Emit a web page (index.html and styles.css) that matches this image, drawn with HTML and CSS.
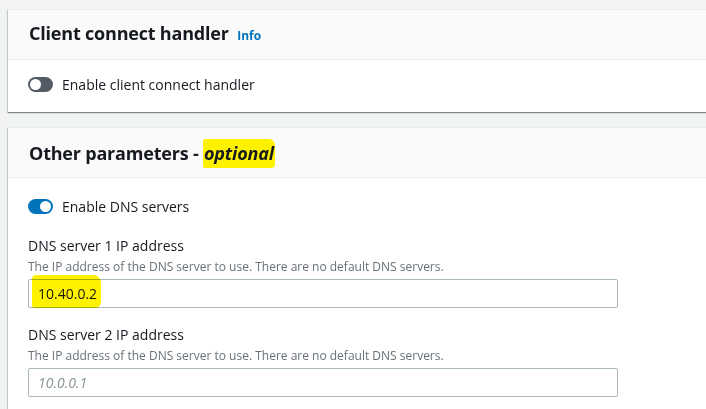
FILE: index.html
```html
<!DOCTYPE html>
<html lang="en">
<head>
  <meta charset="UTF-8">
  <meta name="viewport" content="width=device-width, initial-scale=1.0">
  <title>Client VPN endpoint settings</title>
  <link rel="stylesheet" href="styles.css">
</head>
<body>
  <div class="page">

    <!-- Client connect handler -->
    <section class="container">
      <div class="container-header">
        <h2>Client connect handler <a href="#" class="info">Info</a></h2>
      </div>
      <div class="container-body body-connect">
        <label class="toggle-row">
          <span class="toggle"></span>
          <span>Enable client connect handler</span>
        </label>
      </div>
    </section>

    <!-- Other parameters -->
    <section class="container">
      <div class="container-header">
        <h2>Other parameters - <span class="marker"><em>optional</em></span></h2>
      </div>
      <div class="container-body body-params">
        <label class="toggle-row">
          <span class="toggle on"></span>
          <span>Enable DNS servers</span>
        </label>

        <div class="field first">
          <div class="field-label">DNS server 1 IP address</div>
          <div class="field-desc">The IP address of the DNS server to use. There are no default DNS servers.</div>
          <div class="input-wrap">
            <input class="input" type="text" value="10.40.0.2">
            <span class="input-mark"></span>
          </div>
        </div>

        <div class="field">
          <div class="field-label">DNS server 2 IP address</div>
          <div class="field-desc">The IP address of the DNS server to use. There are no default DNS servers.</div>
          <div class="input-wrap">
            <input class="input" type="text" placeholder="10.0.0.1">
          </div>
        </div>
      </div>
    </section>

  </div>
</body>
</html>
```

FILE: styles.css
```css
html, body {
  margin: 0;
  padding: 0;
  overflow: hidden;
}

body {
  font-family: "Open Sans", "Noto Sans", sans-serif;
  background-color: #f2f3f3;
  color: #16191f;
}

.page {
  padding: 9px 0 0 8px;
}

.container {
  background-color: #fff;
  margin-right: -6px;
  margin-bottom: 15px;
  box-shadow: 0 1px 1px 0 rgba(0,28,36,0.3), 1px 1px 1px 0 rgba(0,28,36,0.15), -1px 1px 1px 0 rgba(0,28,36,0.15);
  border-top: 1px solid #eaeded;
}

.container-header {
  background-color: #fafafa;
  border-bottom: 1px solid #eaeded;
  height: 49px;
  padding: 0 21px;
  display: flex;
  align-items: center;
}

.container-header h2 {
  margin: 0;
  font-size: 18px;
  font-weight: 700;
  line-height: 22px;
  letter-spacing: -0.2px;
}

.info {
  font-size: 12px;
  font-weight: 700;
  color: #0073bb;
  text-decoration: none;
  margin-left: 4px;
  letter-spacing: 0;
}

.marker {
  background-color: #fff200;
  padding: 2px 1px 3px 1px;
  border-radius: 3px 6px 4px 2px;
}

.marker em {
  font-weight: 700;
}

.container-body {
  padding: 0 20px;
}

.body-connect {
  padding-top: 14px;
  padding-bottom: 18px;
}

.body-params {
  padding-top: 18px;
  padding-bottom: 20px;
}

.toggle-row {
  display: flex;
  align-items: center;
  gap: 9px;
  height: 20px;
  font-size: 14px;
  cursor: pointer;
}

.toggle {
  position: relative;
  width: 25px;
  height: 15px;
  border-radius: 8px;
  background-color: #545b64;
  flex-shrink: 0;
}

.toggle::after {
  content: "";
  position: absolute;
  top: 2px;
  left: 2px;
  width: 11px;
  height: 11px;
  border-radius: 50%;
  background-color: #fff;
}

.toggle.on {
  background-color: #0073bb;
}

.toggle.on::after {
  left: 12px;
}

.field {
  margin-top: 17px;
}

.field.first {
  margin-top: 20px;
}

.field-label {
  font-size: 14px;
  line-height: 20px;
}

.field-desc {
  font-size: 12px;
  line-height: 16px;
  color: #687078;
  margin-top: 3px;
}

.input-wrap {
  position: relative;
  width: 590px;
  margin-top: 4px;
}

.input {
  box-sizing: border-box;
  width: 100%;
  height: 29px;
  border: 1px solid #aab7b8;
  border-radius: 2px;
  padding: 0 9px;
  font-family: inherit;
  font-size: 14px;
  color: #16191f;
  background: #fff;
  outline: none;
}

.input::placeholder {
  color: #879596;
  font-style: italic;
}

/* highlighter stroke over the first value */
.input-mark {
  position: absolute;
  left: 4px;
  top: -4px;
  width: 69px;
  height: 33px;
  background-color: #fff200;
  border-radius: 4px 8px 6px 3px;
  mix-blend-mode: multiply;
  pointer-events: none;
}
```
